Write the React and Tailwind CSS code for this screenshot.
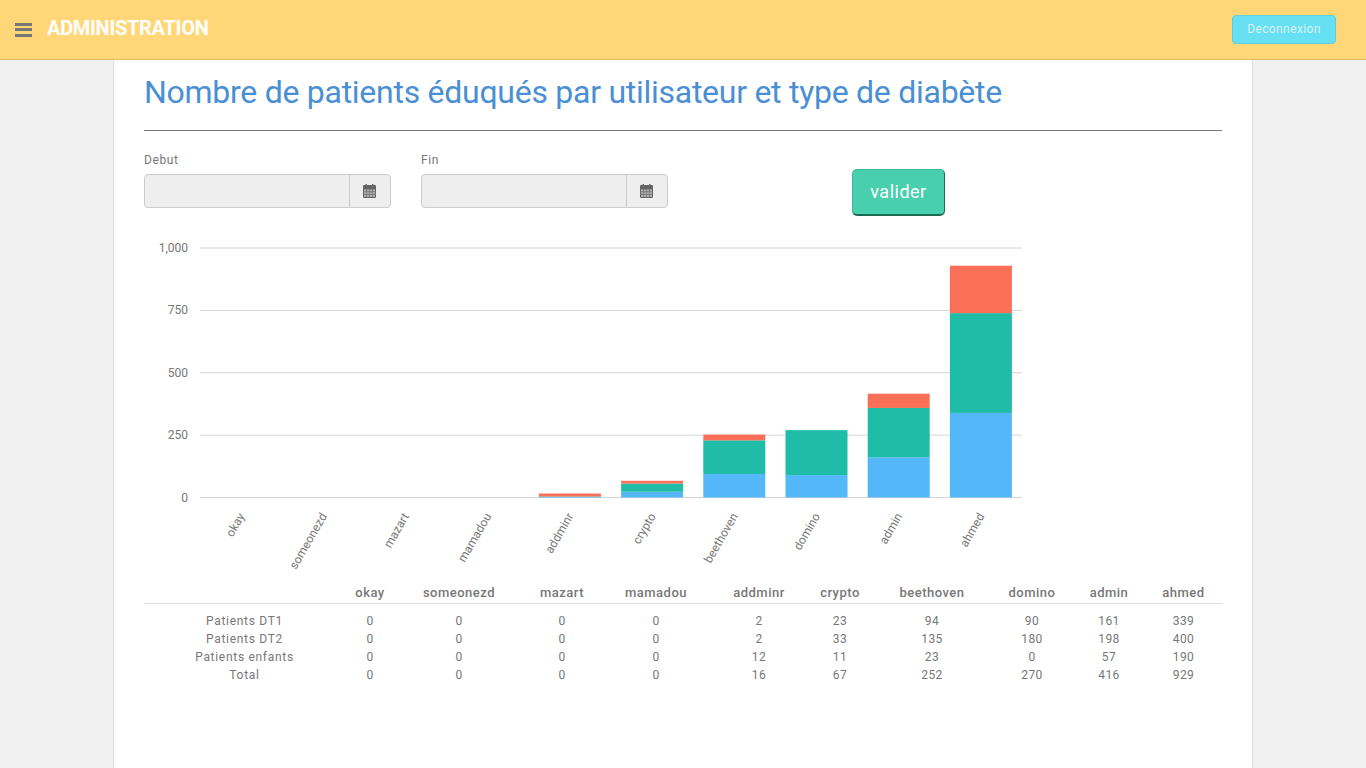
const users = [
  { name: "okay", dt1: 0, dt2: 0, kids: 0 },
  { name: "someonezd", dt1: 0, dt2: 0, kids: 0 },
  { name: "mazart", dt1: 0, dt2: 0, kids: 0 },
  { name: "mamadou", dt1: 0, dt2: 0, kids: 0 },
  { name: "addminr", dt1: 2, dt2: 2, kids: 12 },
  { name: "crypto", dt1: 23, dt2: 33, kids: 11 },
  { name: "beethoven", dt1: 94, dt2: 135, kids: 23 },
  { name: "domino", dt1: 90, dt2: 180, kids: 0 },
  { name: "admin", dt1: 161, dt2: 198, kids: 57 },
  { name: "ahmed", dt1: 339, dt2: 400, kids: 190 },
];

const columnWidths = [201, 50, 128, 78, 110, 96, 66, 118, 82, 72, 77];

const rows = [
  { label: "Patients DT1", value: (u) => u.dt1 },
  { label: "Patients DT2", value: (u) => u.dt2 },
  { label: "Patients enfants", value: (u) => u.kids },
  { label: "Total", value: (u) => u.dt1 + u.dt2 + u.kids },
];

const ticks = [
  { label: "1,000", value: 1000 },
  { label: "750", value: 750 },
  { label: "500", value: 500 },
  { label: "250", value: 250 },
  { label: "0", value: 0 },
];

const FONT = "Roboto, sans-serif";
const BASE = 497.5;
const SCALE = 0.2495;

const MenuIcon = () => {
  return (
    <svg width="17" height="14" viewBox="0 0 17 14" fill="#777">
      <rect width="17" height="3" />
      <rect y="5" width="17" height="3" />
      <rect y="11" width="17" height="3" />
    </svg>
  );
};

const CalendarIcon = () => {
  return (
    <svg width="13" height="14" viewBox="0 0 13 14">
      <rect y="1" width="13" height="13" rx="1" fill="#666" />
      <rect x="2.5" width="1.5" height="3" fill="#666" />
      <rect x="9" width="1.5" height="3" fill="#666" />
      <g fill="#b0b0b0">
        <rect x="1" y="5.5" width="2.4" height="2" />
        <rect x="3.9" y="5.5" width="2.4" height="2" />
        <rect x="6.8" y="5.5" width="2.4" height="2" />
        <rect x="9.7" y="5.5" width="2.4" height="2" />
        <rect x="1" y="8.2" width="2.4" height="2" />
        <rect x="3.9" y="8.2" width="2.4" height="2" />
        <rect x="6.8" y="8.2" width="2.4" height="2" />
        <rect x="9.7" y="8.2" width="2.4" height="2" />
        <rect x="1" y="10.9" width="2.4" height="2" />
        <rect x="3.9" y="10.9" width="2.4" height="2" />
        <rect x="6.8" y="10.9" width="2.4" height="2" />
        <rect x="9.7" y="10.9" width="2.4" height="2" />
      </g>
    </svg>
  );
};

const BarChart = () => {
  return (
    <svg
      className="block mt-[14px]"
      width="878"
      height="345"
      viewBox="144 230 878 345"
      fontFamily={FONT}
    >
      {ticks.map((t) => {
        const y = BASE - t.value * SCALE;
        return (
          <g key={t.label}>
            <line x1="200" x2="1022" y1={y} y2={y} stroke="#d4d4d4" />
            <text x="188" y={y + 4} textAnchor="end" fontSize="12" fill="#777">
              {t.label}
            </text>
          </g>
        );
      })}
      {users.map((u, i) => {
        const center = 241.1 + i * 82.2;
        const x = center - 31;
        const h1 = u.dt1 * SCALE;
        const h2 = u.dt2 * SCALE;
        const h3 = u.kids * SCALE;
        return (
          <g key={u.name}>
            {u.dt1 + u.dt2 + u.kids > 0 && (
              <g>
                <rect x={x} y={BASE - h1} width="62" height={h1} fill="#53b7f9" />
                <rect x={x} y={BASE - h1 - h2} width="62" height={h2} fill="#1fbca7" />
                <rect x={x} y={BASE - h1 - h2 - h3} width="62" height={h3} fill="#fa6f57" />
              </g>
            )}
            <text
              x={center + 4}
              y="516"
              textAnchor="end"
              fontSize="12"
              fill="#777"
              transform={`rotate(-60 ${center + 4} 516)`}
            >
              {u.name}
            </text>
          </g>
        );
      })}
    </svg>
  );
};

const DateField = ({ label }) => {
  return (
    <div className="w-[247px]">
      <label className="block pt-px text-[12px] leading-[17px] tracking-[0.6px] text-[#777]">
        {label}
      </label>
      <div className="flex h-[34px] mt-[5px] rounded border border-[#ccc] bg-[#eee]">
        <div className="flex-1" />
        <div className="flex w-[41px] items-center justify-center border-l border-[#ccc] pr-[2px]">
          <CalendarIcon />
        </div>
      </div>
    </div>
  );
};

const App = () => {
  return (
    <div className="flex flex-col h-screen overflow-hidden bg-[#f1f1f1] font-[Roboto,sans-serif]">
      <header className="flex h-[60px] shrink-0 items-center justify-between border-b border-[#e3bb66] bg-[#ffd778] pl-[15px] pr-[30px]">
        <div className="flex items-center gap-[15px]">
          <MenuIcon />
          <span className="pb-[3px] text-[20px] font-bold tracking-[-0.3px] text-white">
            ADMINISTRATION
          </span>
        </div>
        <button className="h-[29px] w-[104px] rounded border border-[#5fcfdf] bg-[#66e0f2] pb-px text-[12px] tracking-[0.4px] text-[#d8f0ee]">
          Deconnexion
        </button>
      </header>
      <main className="flex-1 w-[1140px] mx-auto border-x border-[#ddd] bg-white px-[30px]">
        <h1 className="pt-[12px] pb-[17px] text-[32px] leading-[41px] tracking-[-0.27px] text-[#4a8fd3]">
          Nombre de patients éduqués par utilisateur et type de diabète
        </h1>
        <hr className="border-[#777]" />
        <div className="flex items-start gap-[30px] mt-[20px]">
          <DateField label="Debut" />
          <DateField label="Fin" />
          <button className="h-[47px] w-[93px] ml-[154px] mt-[18px] rounded-[5px] border border-[#3cb89a] border-r-[#1c6b57] border-b-2 border-b-[#1c6b57] bg-[#48cfad] pb-[2px] text-[18px] tracking-[0.5px] text-white">
            valider
          </button>
        </div>
        <BarChart />
        <table className="w-[1078px] table-fixed text-center text-[12px] tracking-[0.4px] text-[#777]">
          <colgroup>
            {columnWidths.map((w, i) => (
              <col key={i} style={{ width: w }} />
            ))}
          </colgroup>
          <thead>
            <tr className="border-b border-[#ddd]">
              <th className="h-[28px] font-normal" />
              {users.map((u) => (
                <th
                  key={u.name}
                  className="h-[28px] pt-[8px] align-middle text-[13px] font-medium tracking-[0.5px]"
                >
                  {u.name}
                </th>
              ))}
            </tr>
          </thead>
          <tbody>
            <tr>
              <td colSpan={11} className="h-[9px]" />
            </tr>
            {rows.map((r) => (
              <tr key={r.label}>
                <td className="h-[18px] tracking-[0.7px]">{r.label}</td>
                {users.map((u) => (
                  <td key={u.name} className="h-[18px]">
                    {r.value(u)}
                  </td>
                ))}
              </tr>
            ))}
          </tbody>
        </table>
      </main>
    </div>
  );
};

export default App;
